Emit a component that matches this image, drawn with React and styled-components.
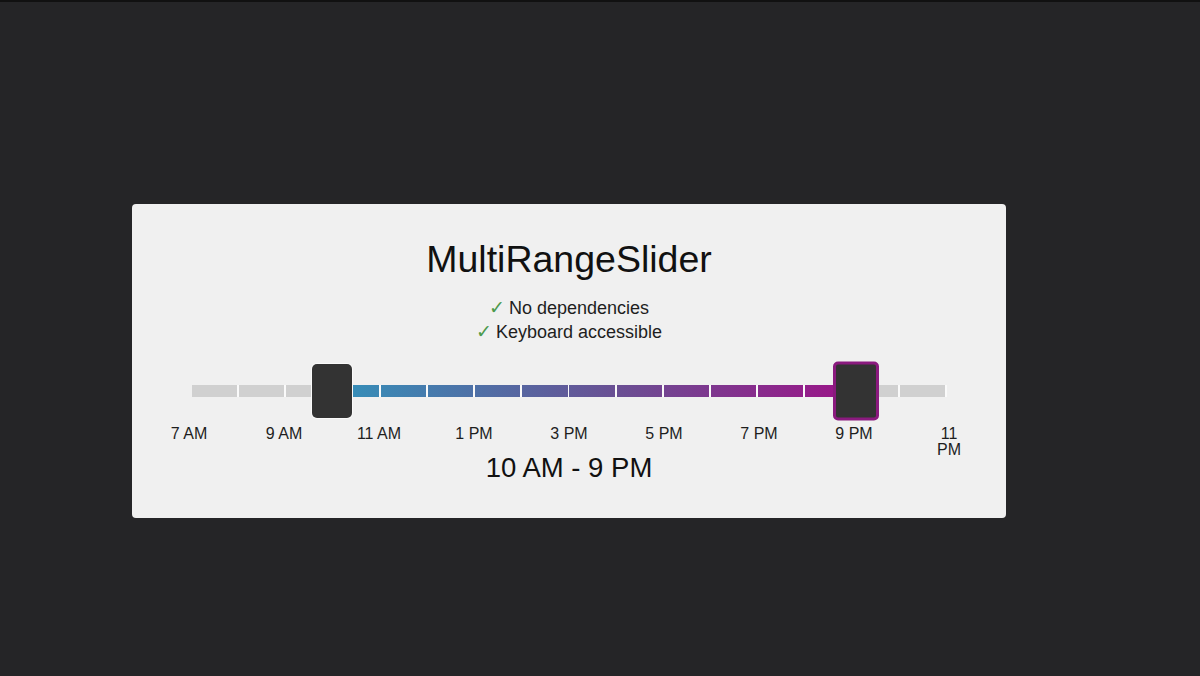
import React, { useState } from 'react';
import styled, { createGlobalStyle } from 'styled-components';

const GlobalStyle = createGlobalStyle`
  html, body {
    margin: 0;
    padding: 0;
    background: #252527;
  }
  * {
    box-sizing: border-box;
  }
`;

const MIN = 7;
const MAX = 23;
const TRACK_WIDTH = 755;
const SEGMENTS = MAX - MIN;

const Page = styled.div`
  min-height: 100vh;
  background: #252527;
  border-top: 2px solid #111;
  padding: 202px 0 0 132px;
  font-family: 'Liberation Sans', Arial, sans-serif;
`;

const Card = styled.div`
  width: 874px;
  height: 314px;
  background: #f0f0f0;
  border-radius: 4px;
  padding: 33px 0 0;
  display: flex;
  flex-direction: column;
  align-items: center;
`;

const Title = styled.h1`
  margin: 0;
  font-size: 37.5px;
  line-height: 44px;
  font-weight: 400;
  color: #111;
`;

const Features = styled.ul`
  list-style: none;
  margin: 15px 0 0;
  padding: 0;
  text-align: center;
`;

const Feature = styled.li`
  font-size: 18px;
  line-height: 24px;
  color: #1e1e1e;
`;

const Check = styled.span`
  color: #4c9a4c;
  font-family: 'DejaVu Sans', sans-serif;
  font-size: 19px;
  line-height: 0;
  margin-right: -1px;
`;

const Slider = styled.div`
  position: relative;
  width: ${TRACK_WIDTH}px;
  height: 60px;
  margin-top: 17px;
  display: flex;
  align-items: center;
`;

const Track = styled.div`
  position: relative;
  width: 100%;
  height: 12px;
  background: #d0d0d0;
`;

const Fill = styled.div`
  position: absolute;
  top: 0;
  bottom: 0;
  background: linear-gradient(to right, #3391ba, #6a4f93 55%, #9c1488);
`;

const Gaps = styled.div`
  position: absolute;
  inset: 0;
  background: repeating-linear-gradient(
    to right,
    transparent 0,
    transparent ${TRACK_WIDTH / SEGMENTS - 2}px,
    #fafafa ${TRACK_WIDTH / SEGMENTS - 2}px,
    #fafafa ${TRACK_WIDTH / SEGMENTS}px
  );
`;

const Thumb = styled.div`
  position: absolute;
  top: 50%;
  transform: translateY(-50%);
  width: ${(p) => (p.$active ? 46 : 40)}px;
  height: ${(p) => (p.$active ? 59 : 54)}px;
  margin-left: ${(p) => (p.$active ? -19 : -21)}px;
  background: #333;
  border-radius: 5px;
  border: ${(p) => (p.$active ? '3px solid #8a1a7e' : 'none')};
  box-shadow: ${(p) => (p.$active ? 'none' : '0 0 0 1px #fafafa')};
  outline: none;
  cursor: grab;
`;

const Labels = styled.div`
  display: grid;
  grid-template-columns: repeat(9, 95px);
  height: 26px;
  margin-top: 5px;
`;

const Label = styled.span`
  justify-self: center;
  text-align: center;
  font-size: 16px;
  line-height: 16px;
  color: #1e1e1e;
  max-width: ${(p) => (p.$narrow ? '36px' : 'none')};
`;

const Range = styled.div`
  font-size: 27.5px;
  line-height: 32px;
  color: #111;
`;

const fmt = (h) => {
  const suffix = h >= 12 ? 'PM' : 'AM';
  const v = h % 12 === 0 ? 12 : h % 12;
  return `${v} ${suffix}`;
};

const pos = (h) => ((h - MIN) / (MAX - MIN)) * TRACK_WIDTH;

export default function App() {
  const [low] = useState(10);
  const [high] = useState(21);
  const ticks = [];
  for (let h = MIN; h <= MAX; h += 2) ticks.push(h);

  return (
    <>
      <GlobalStyle />
      <Page>
        <Card>
          <Title>MultiRangeSlider</Title>
          <Features>
            <Feature>
              <Check>✓</Check> No dependencies
            </Feature>
            <Feature>
              <Check>✓</Check> Keyboard accessible
            </Feature>
          </Features>
          <Slider>
            <Track>
              <Fill style={{ left: pos(low), width: pos(high) - pos(low) }} />
              <Gaps />
            </Track>
            <Thumb
              role="slider"
              tabIndex={0}
              aria-valuenow={low}
              style={{ left: pos(low) }}
            />
            <Thumb
              $active
              role="slider"
              tabIndex={0}
              aria-valuenow={high}
              style={{ left: pos(high) }}
            />
          </Slider>
          <Labels>
            {ticks.map((h) => (
              <Label key={h} $narrow={h === MAX}>
                {fmt(h)}
              </Label>
            ))}
          </Labels>
          <Range>
            {fmt(low)} - {fmt(high)}
          </Range>
        </Card>
      </Page>
    </>
  );
}
